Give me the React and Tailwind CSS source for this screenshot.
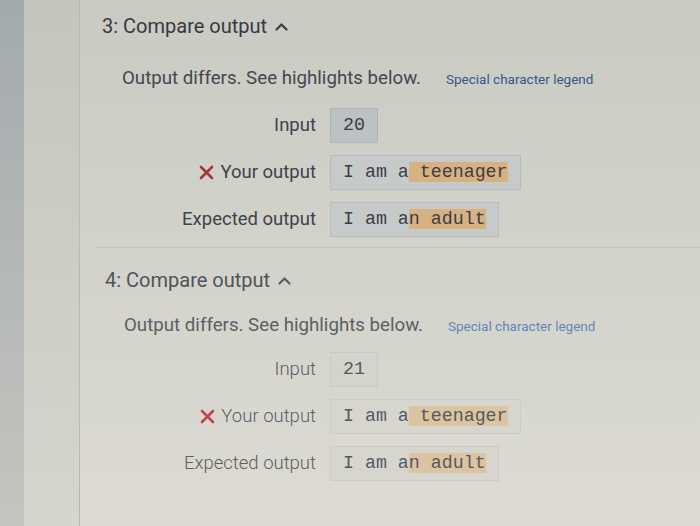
import React from "react";

const roboto = { fontFamily: "Roboto, 'Liberation Sans', sans-serif" };

function Chevron({ color }) {
  return (
    <svg width="13" height="9" viewBox="0 0 13 9" className="ml-[8px]">
      <path d="M1.5 7.5 L6.5 2.5 L11.5 7.5" fill="none" stroke={color} strokeWidth="2.2" strokeLinecap="round" strokeLinejoin="round" />
    </svg>
  );
}

function XIcon({ color }) {
  return (
    <svg width="15" height="15" viewBox="0 0 15 15" className="mr-[6px]">
      <path d="M2 2 L13 13 M13 2 L2 13" stroke={color} strokeWidth="2.6" strokeLinecap="round" />
    </svg>
  );
}

function Box({ children, cls }) {
  return (
    <div className={`h-[35px] flex items-center px-3 border text-[18.3px] ${cls}`} style={{ fontFamily: "'Liberation Mono', monospace" }}>
      <span className="whitespace-pre">{children}</span>
    </div>
  );
}

function Section({ num, c }) {
  return (
    <div style={roboto}>
      <div className={`flex items-center h-7 text-[20px] ${c.headMl} ${c.head}`}>
        <span>{num}: Compare output</span>
        <Chevron color={c.chev} />
      </div>
      <div className={`flex items-baseline h-6 ${c.descMt} ${c.descMl}`}>
        <span className={`text-[18.7px] ${c.desc}`}>Output differs. See highlights below.</span>
        <span className={`ml-[25px] text-[13.5px] ${c.link}`}>Special character legend</span>
      </div>
      <div className={`flex flex-col gap-3 ${c.rowsMt}`}>
        <div className="flex items-center gap-[14px]">
          <div className={`w-[214px] text-right text-[18.5px] ${c.label}`}>Input</div>
          <Box cls={c.inputBox}>{num === 3 ? "20" : "21"}</Box>
        </div>
        <div className="flex items-center gap-[14px]">
          <div className={`w-[214px] flex items-center justify-end text-[18.5px] ${c.label}`}>
            <XIcon color={c.x} />
            <span>Your output</span>
          </div>
          <Box cls={c.outBox}>
            <span className={c.text}>I am a</span>
            <span className={`${c.hl} ${c.text}`}> teenager</span>
          </Box>
        </div>
        <div className="flex items-center gap-[14px]">
          <div className={`w-[214px] text-right text-[18.5px] ${c.label}`}>Expected output</div>
          <Box cls={c.outBox}>
            <span className={c.text}>I am a</span>
            <span className={`${c.hl} ${c.text}`}>n adult</span>
          </Box>
        </div>
      </div>
    </div>
  );
}

export default function App() {
  const c3 = {
    headMl: "ml-0",
    head: "text-[#363942]",
    chev: "#3a3d45",
    descMt: "mt-6",
    descMl: "ml-5",
    desc: "text-[#44474e]",
    link: "text-[#36578a]",
    rowsMt: "mt-5",
    label: "text-[#3f4249]",
    x: "#a8353b",
    inputBox: "bg-[#bcc1c3] border-[#b0b5b7] text-[#3a3d42]",
    outBox: "bg-[#c6cacb] border-[#b8bcbd] text-[#3a3d42]",
    hl: "bg-[#d8b183]",
    text: "text-[#3b3e44]",
  };
  const c4 = {
    headMl: "ml-[3px]",
    head: "text-[#4f535c]",
    chev: "#5a5e66",
    descMt: "mt-[17px]",
    descMl: "ml-[22px]",
    desc: "text-[#5b5f66]",
    link: "text-[#5f87ba]",
    rowsMt: "mt-[17px]",
    label: "text-[#5a5e65] font-light",
    x: "#c0444b",
    inputBox: "bg-[#d4d4cd] border-[#c8c9c2] text-[#55585d]",
    outBox: "bg-[#d6d6cf] border-[#caccc5] text-[#55585d]",
    hl: "bg-[#dcc4a1]",
    text: "text-[#56595f]",
  };
  return (
    <div className="w-[700px] h-[526px] flex overflow-hidden bg-linear-to-b from-[#c9cbc3] to-[#dddbd3]">
      <div className="w-[24px] h-full bg-linear-to-b from-[#a3aaae] to-[#c4c5be]" />
      <div className="w-[56px] h-full border-r border-[#b7b9b2] bg-linear-to-b from-[#c4c6be] to-[#d6d5ce]" />
      <div className="flex-1 flex flex-col pt-3">
        <div className="pl-[22px]">
          <Section num={3} c={c3} />
        </div>
        <div className="mt-[10px] ml-[15px] border-t border-[#c3c4bd]" />
        <div className="pl-[22px] mt-[18px]">
          <Section num={4} c={c4} />
        </div>
      </div>
    </div>
  );
}
